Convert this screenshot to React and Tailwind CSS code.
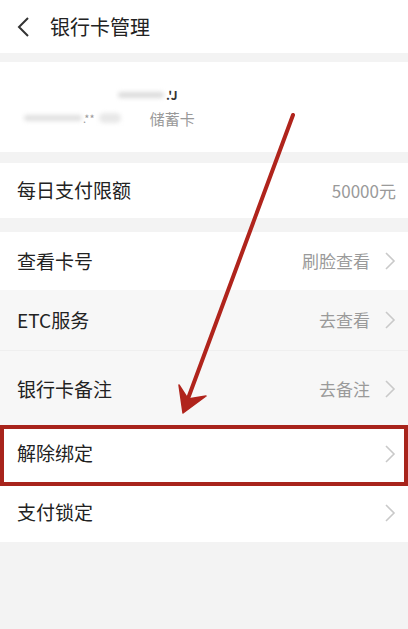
import React from "react";

const Chevron = () => (
  <svg width="12" height="20" viewBox="0 0 12 20" className="shrink-0">
    <polyline points="2,2 10,10 2,18" fill="none" stroke="#c9c9c9" strokeWidth="1.6" />
  </svg>
);

const Row = ({ label, value, chevron = true, bg = "bg-white", h = "h-[58px]", extra = "" }) => (
  <div className={`flex items-center justify-between pl-[17px] pr-[12px] ${bg} ${h} ${extra}`}>
    <span className="text-[19px] text-[#222]">{label}</span>
    <div className="flex items-center gap-[14px]">
      {value && <span className="text-[17px] text-[#9a9a9a]">{value}</span>}
      {chevron && <Chevron />}
    </div>
  </div>
);

export default function App() {
  return (
    <div
      className="relative w-[408px] h-[629px] overflow-hidden bg-[#f3f3f3]"
      style={{ fontFamily: '"Noto Sans CJK SC", "Noto Sans", sans-serif' }}
    >
      {/* header */}
      <div className="flex items-center h-[53px] bg-white pl-[16px]">
        <svg width="14" height="22" viewBox="0 0 14 22">
          <polyline points="12,2 3,11 12,20" fill="none" stroke="#333" strokeWidth="2" />
        </svg>
        <span className="ml-[20px] text-[20px] text-[#222]">银行卡管理</span>
      </div>

      {/* card info (redacted) */}
      <div className="mt-[9px] h-[90px] bg-white flex flex-col justify-center gap-[4px]">
        <div className="flex items-center pl-[118px] h-[18px]">
          <div className="w-[46px] h-[6px] rounded-full bg-[#dcdcdc] blur-[2px]" />
          <span className="ml-[2px] text-[12px] leading-none text-[#333] font-bold">.'J</span>
        </div>
        <div className="flex items-center pl-[24px] h-[20px]">
          <div className="w-[58px] h-[6px] rounded-full bg-[#e0e0e0] blur-[2px]" />
          <span className="ml-[1px] text-[11px] leading-none text-[#999]">.**</span>
          <div className="ml-[4px] w-[22px] h-[10px] rounded-full bg-[#e8e8e8] blur-[2px]" />
          <span className="ml-[29px] text-[15px] leading-none text-[#999]">储蓄卡</span>
        </div>
      </div>

      <div className="mt-[11px]">
        <Row label="每日支付限额" value="50000元" chevron={false} h="h-[55px]" />
      </div>

      <div className="mt-[14px]">
        <Row label="查看卡号" value="刷脸查看" h="h-[58px]" />
        <Row label="ETC服务" value="去查看" bg="bg-[#f7f7f7]" h="h-[60px]" />
        <Row label="银行卡备注" value="去备注" bg="bg-[#f7f7f7]" h="h-[75px]" extra="border-t border-[#efefef] pt-[2px]" />
        <div className="border-[4px] border-[#a8241c] bg-white">
          <Row label="解除绑定" h="h-[53px]" extra="!pl-[13px] !pr-[8px] pb-[4px]" />
        </div>
        <Row label="支付锁定" h="h-[56px]" extra="pb-[3px]" />
      </div>

      {/* annotation arrow */}
      <svg className="absolute left-0 top-0 pointer-events-none" width="408" height="629" viewBox="0 0 408 629">
        <line x1="293" y1="115" x2="186" y2="404" stroke="#b0241c" strokeWidth="4" strokeLinecap="round" />
        <polygon points="183,413 179,385 188,399 206,396" fill="#b0241c" stroke="#b0241c" strokeWidth="1.5" strokeLinejoin="round" />
      </svg>
    </div>
  );
}
